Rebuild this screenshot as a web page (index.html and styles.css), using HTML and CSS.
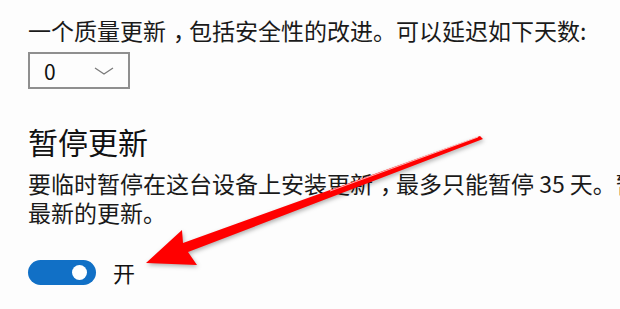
FILE: index.html
```html
<!DOCTYPE html>
<html lang="zh-CN">
<head>
    <meta charset="UTF-8">
    <meta name="viewport" content="width=device-width, initial-scale=1.0">
    <title>暂停更新</title>
    <link rel="stylesheet" href="styles.css">
</head>
<body>

    <div class="page">
        <p class="desc">一个质量更新<span class="comma">，</span>包括安全性的改进。可以延迟如下天数:</p>

        <!-- Dropdown for defer days -->
        <div class="select">
            <span class="select-value">0</span>
            <svg class="chevron" width="20" height="8" viewBox="0 0 20 8">
                <polyline points="1,1 10,7 19,1" fill="none" stroke="#7a7a7a" stroke-width="1.3"/>
            </svg>
        </div>

        <h2 class="title">暂停更新</h2>

        <p class="note">
            <span class="line">要临时暂停在这台设备上安装更新<span class="comma">，</span>最多只能暂停 35 天。暂停</span>
            <span class="line">最新的更新。</span>
        </p>

        <div class="toggle-row">
            <div class="toggle"><span class="knob"></span></div>
            <span class="toggle-label">开</span>
        </div>
    </div>

    <!-- Red annotation arrow drawn over the screenshot -->
    <svg class="arrow" width="620" height="309" viewBox="0 0 620 309">
        <polygon points="480,136 483,139 188,252 197,265 146,263 182,230 183,243" fill="#ff0000"/>
        <line x1="478" y1="137" x2="330" y2="191" stroke="#ffffff" stroke-width="1" opacity="0.7"/>
    </svg>

</body>
</html>
```

FILE: styles.css
```css
body {
    margin: 0;
    background-color: #fdfdfd;
    color: #1a1a1a;
    font-family: "Noto Sans CJK SC", "Noto Sans", sans-serif;
    overflow: hidden;
    width: 620px;
    height: 309px;
    position: relative;
}
.page {
    padding: 16px 0 0 28px;
}
.desc {
    margin: 0;
    font-size: 23px;
    line-height: 29px;
    white-space: nowrap;
}
/* comma sits centred in its cell, like the original system font */
.comma {
    display: inline-block;
    width: 16px;
    margin-left: 7px;
}
.select {
    margin-top: 7px;
    width: 70px;
    height: 33px;
    border: 2px solid #8f8f8f;
    display: flex;
    align-items: center;
    justify-content: space-between;
    padding: 0 14px 0 14px;
}
.select-value {
    font-size: 21px;
    color: #111;
}
.title {
    margin: 32px 0 0;
    font-size: 30px;
    font-weight: normal;
    line-height: 40px;
    color: #111;
}
.note {
    margin: 8px 0 0;
    font-size: 23px;
    line-height: 29px;
}
/* each visual line kept on one row, text runs past the window edge */
.note .line {
    display: block;
    white-space: nowrap;
}
.toggle-row {
    margin-top: 29px;
    display: flex;
    align-items: center;
    gap: 17px;
}
.toggle {
    width: 68px;
    height: 25px;
    border-radius: 13px;
    background-color: #1170c6;
    position: relative;
}
.knob {
    position: absolute;
    right: 9px;
    top: 5px;
    width: 15px;
    height: 15px;
    border-radius: 50%;
    background-color: #fff;
}
.toggle-label {
    font-size: 22px;
    color: #111;
}
.arrow {
    position: absolute;
    left: 0;
    top: 0;
    filter: drop-shadow(1px 2px 2px rgba(0, 0, 0, 0.3));
}
```
